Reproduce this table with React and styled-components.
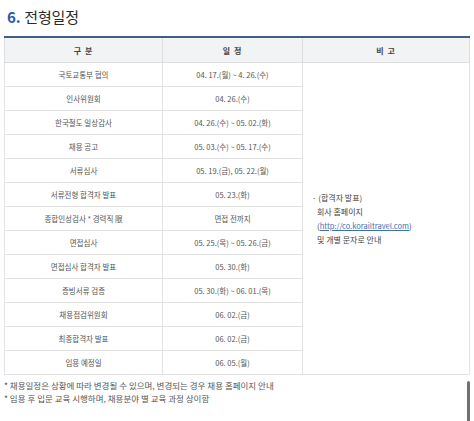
import React from "react";
import styled, { createGlobalStyle } from "styled-components";

const GlobalStyle = createGlobalStyle`
  html, body {
    margin: 0;
    padding: 0;
    background: #ffffff;
    font-family: "Noto Sans CJK KR", "Noto Sans", sans-serif;
    color: #555;
  }
`;

const Page = styled.div`
  position: relative;
  width: 474px;
  height: 421px;
  overflow: hidden;
  padding: 7px 5px 0 4px;
  box-sizing: border-box;
`;

const Title = styled.h2`
  margin: 0 0 9px 3px;
  font-size: 15px;
  line-height: 20px;
  font-weight: 400;
  color: #2a2a2a;
  letter-spacing: -0.2px;

  span {
    color: #1d5bb0;
    font-weight: 700;
    margin-right: 4px;
  }
`;

const Table = styled.table`
  width: 465px;
  border-collapse: collapse;
  table-layout: fixed;
  border-top: 2px solid #3e5f7f;
`;

const Th = styled.th`
  height: 24px;
  padding: 0;
  background: #f2f3f5;
  border: 1px solid #dedede;
  border-top: none;
  font-size: 8px;
  font-weight: 700;
  color: #444;
  text-align: center;
  letter-spacing: 1px;
`;

const Td = styled.td`
  height: 23px;
  padding: 0;
  border: 1px solid #e3e3e3;
  font-size: 7.5px;
  color: #555;
  text-align: center;
  vertical-align: middle;
`;

const NoteCell = styled.td`
  padding: 0 0 0 14px;
  border: 1px solid #e3e3e3;
  vertical-align: middle;
  text-align: left;
  font-size: 8px;
  line-height: 14px;
  color: #444;
`;

const NoteLine = styled.div`
  text-indent: ${(p) => (p.$bullet ? "-5px" : "0")};
`;

const Link = styled.a`
  color: #3a6fb8;
  text-decoration: underline;
  font-size: 7.5px;
`;

const Notes = styled.div`
  margin-top: 4px;
  font-size: 8.5px;
  line-height: 13px;
  color: #555;
`;

const ScrollThumb = styled.div`
  position: absolute;
  right: 4px;
  top: 381px;
  width: 3px;
  height: 48px;
  border-radius: 2px;
  background: #707070;
`;

const rows = [
  ["국토교통부 협의", "04. 17.(월) ~ 4. 26.(수)"],
  ["인사위원회", "04. 26.(수)"],
  ["한국철도 일상감사", "04. 26.(수) ~ 05. 02.(화)"],
  ["채용 공고", "05. 03.(수) ~ 05. 17.(수)"],
  ["서류심사", "05. 19.(금), 05. 22.(월)"],
  ["서류전형 합격자 발표", "05. 23.(화)"],
  ["종합인성검사 * 경력직 限", "면접 전까지"],
  ["면접심사", "05. 25.(목) ~ 05. 26.(금)"],
  ["면접심사 합격자 발표", "05. 30.(화)"],
  ["증빙서류 검증", "05. 30.(화) ~ 06. 01.(목)"],
  ["채용점검위원회", "06. 02.(금)"],
  ["최종합격자 발표", "06. 02.(금)"],
  ["임용 예정일", "06. 05.(월)"],
];

export default function App() {
  return (
    <>
      <GlobalStyle />
      <Page>
        <Title>
          <span>6.</span>전형일정
        </Title>
        <Table>
          <colgroup>
            <col style={{ width: 158 }} />
            <col style={{ width: 140 }} />
            <col style={{ width: 167 }} />
          </colgroup>
          <thead>
            <tr>
              <Th>구 분</Th>
              <Th>일 정</Th>
              <Th>비 고</Th>
            </tr>
          </thead>
          <tbody>
            {rows.map(([label, date], i) => (
              <tr key={label}>
                <Td>{label}</Td>
                <Td>{date}</Td>
                {i === 0 && (
                  <NoteCell rowSpan={rows.length}>
                    <NoteLine $bullet>· (합격자 발표)</NoteLine>
                    <NoteLine>회사 홈페이지</NoteLine>
                    <NoteLine>
                      (<Link href="#">http://co.korailtravel.com</Link>)
                    </NoteLine>
                    <NoteLine>및 개별 문자로 안내</NoteLine>
                  </NoteCell>
                )}
              </tr>
            ))}
          </tbody>
        </Table>
        <Notes>
          <div>* 채용일정은 상황에 따라 변경될 수 있으며, 변경되는 경우 채용 홈페이지 안내</div>
          <div>* 임용 후 입문 교육 시행하며, 채용분야 별 교육 과정 상이함</div>
        </Notes>
        <ScrollThumb />
      </Page>
    </>
  );
}
